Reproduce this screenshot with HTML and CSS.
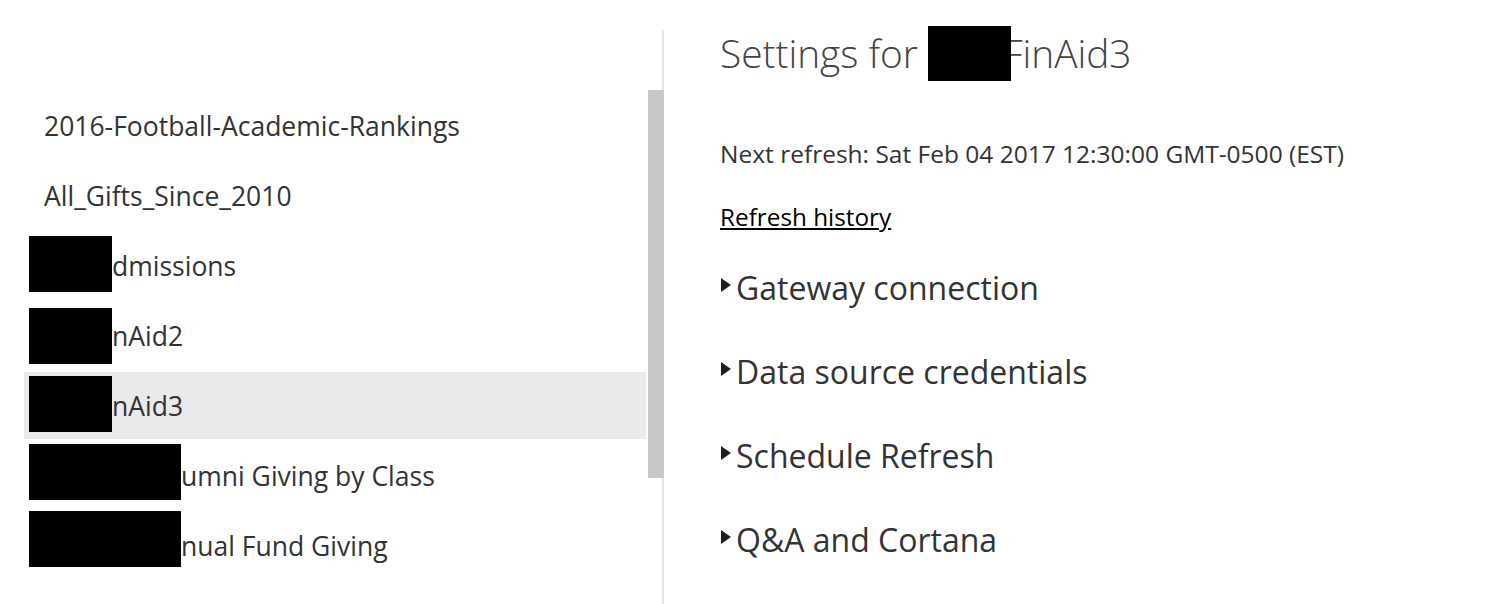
FILE: index.html
```html
<!DOCTYPE html>
<html>
<head>
<meta charset="utf-8">
<link rel="stylesheet" href="styles.css">
</head>
<body>
<div class="page">
  <div class="left">
    <ul class="list">
      <li class="row">2016-Football-Academic-Rankings</li>
      <li class="row">All_Gifts_Since_2010</li>
      <li class="row"><span class="redact r1"></span>dmissions</li>
      <li class="row"><span class="redact r2"></span>nAid2</li>
      <li class="row selected"><span class="redact r3"></span>nAid3</li>
      <li class="row"><span class="redact wide r4"></span>umni Giving by Class</li>
      <li class="row"><span class="redact wide r5"></span>nual Fund Giving</li>
    </ul>
    <div class="scroll">
      <div class="thumb"></div>
    </div>
  </div>
  <div class="right">
    <h1 class="title">Settings for <span class="redact title-redact"></span>FinAid3</h1>
    <p class="next">Next refresh: Sat Feb 04 2017 12:30:00 GMT-0500 (EST)</p>
    <a class="history" href="#">Refresh history</a>
    <div class="sections">
      <div class="section"><span class="tri"></span>Gateway connection</div>
      <div class="section"><span class="tri"></span>Data source credentials</div>
      <div class="section"><span class="tri"></span>Schedule Refresh</div>
      <div class="section"><span class="tri"></span>Q&amp;A and Cortana</div>
    </div>
  </div>
</div>
</body>
</html>
```

FILE: styles.css
```css
html, body {
  margin: 0;
  padding: 0;
  background: #ffffff;
}
body {
  font-family: "Open Sans", "Noto Sans", sans-serif;
  color: #333333;
  width: 1508px;
  height: 604px;
  overflow: hidden;
}
.page {
  display: flex;
  height: 604px;
}
.left {
  display: flex;
  width: 664px;
  flex: none;
}
.list {
  list-style: none;
  margin: 0;
  padding: 92px 0 0 24px;
  width: 622px;
}
.row {
  height: 67px;
  margin-bottom: 3px;
  display: flex;
  align-items: center;
  padding-left: 20px;
  font-size: 26.5px;
  color: #333333;
  white-space: nowrap;
}
.row.selected {
  background: #eaeaea;
}
.redact {
  display: inline-block;
  position: relative;
  width: 83px;
  height: 56px;
  margin-left: -15px;
  background: #000000;
  flex: none;
}
.redact.wide {
  width: 152px;
}
.r1 { top: -2px; }
.r2 { top: 0; }
.r3 { top: -2px; }
.r4 { top: -4px; }
.r5 { top: -7px; }
.scroll {
  width: 16px;
  margin-left: 2px;
  margin-top: 30px;
  background: linear-gradient(to left, #e6e6e6 2px, transparent 2px);
}
.thumb {
  margin-top: 60px;
  height: 388px;
  background: #c8c8c8;
}
.right {
  padding-left: 56px;
  flex: 1;
}
.title {
  margin: 0;
  padding-top: 22px;
  height: 62px;
  font-size: 38.8px;
  font-weight: 300;
  color: #444444;
  line-height: 62px;
  white-space: nowrap;
}
.title-redact {
  width: 83px;
  height: 55px;
  margin-left: 0;
  margin-right: -8px;
  vertical-align: middle;
  top: -4px;
}
.next {
  margin: 55px 0 0 0;
  font-size: 24.5px;
  line-height: 30px;
  color: #333333;
}
.history {
  display: inline-block;
  margin-top: 33px;
  font-size: 24.3px;
  line-height: 30px;
  color: #000000;
  text-decoration: underline;
}
.sections {
  margin-top: 13px;
}
.section {
  display: flex;
  align-items: center;
  height: 84px;
  font-size: 32px;
  color: #333333;
}
.tri {
  width: 0;
  height: 0;
  border-top: 7px solid transparent;
  border-bottom: 7px solid transparent;
  border-left: 10px solid #1f1f1f;
  margin-left: 1px;
  margin-right: 5px;
  position: relative;
  top: -2px;
}
```
